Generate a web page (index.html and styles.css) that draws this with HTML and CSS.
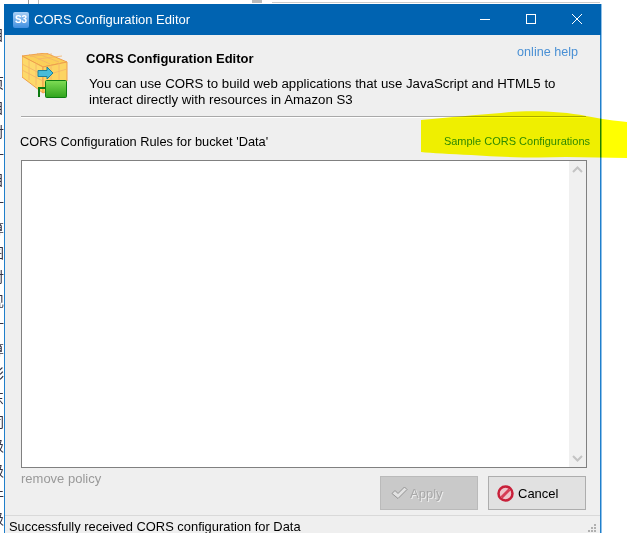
FILE: index.html
```html
<!DOCTYPE html>
<html lang="en">
<head>
    <meta charset="UTF-8">
    <meta name="viewport" content="width=device-width, initial-scale=1.0">
    <title>CORS Configuration Editor</title>
    <link rel="stylesheet" href="styles.css">
</head>
<body>
    <div class="desktop">
        <div class="behind-top">
            <svg width="627" height="4" viewBox="0 0 627 4">
                <rect x="28" y="0" width="1" height="4" fill="#999"/>
                <rect x="38" y="0" width="1" height="4" fill="#bbb"/>
                <rect x="252" y="0" width="10" height="3" fill="#bbb"/>
                <rect x="272" y="2" width="328" height="1" fill="#ccc"/>
            </svg>
        </div>
        <div class="behind-left">目<br>✓<br>页<br>目<br>对<br>计<br>目<br>计<br>算<br>图<br>对<br>现<br>计<br>算<br>彩<br>东<br>同<br>级<br>级<br>件<br>级</div>

        <div class="window">
            <div class="titlebar">
                <div class="app-icon">S3</div>
                <div class="window-title">CORS Configuration Editor</div>
                <div class="window-controls">
                    <svg class="ctrl" width="46" height="31" viewBox="0 0 46 31"><path d="M18 15.5h10" stroke="#fff" fill="none"/></svg>
                    <svg class="ctrl" width="46" height="31" viewBox="0 0 46 31"><rect x="18.5" y="10.5" width="9" height="9" stroke="#fff" fill="none"/></svg>
                    <svg class="ctrl" width="46" height="31" viewBox="0 0 46 31"><path d="M18 10l10 10M28 10l-10 10" stroke="#fff" fill="none"/></svg>
                </div>
            </div>

            <div class="header">
                <svg class="cube" width="46" height="46" viewBox="0 0 46 46">
                    <defs>
                        <linearGradient id="greenbox" x1="0" y1="0" x2="0" y2="1">
                            <stop offset="0" stop-color="#7fdc55"/>
                            <stop offset="1" stop-color="#2fa31c"/>
                        </linearGradient>
                    </defs>
                    <polygon points="0,3 24,0 45,9 21,14" fill="#fbcf58" stroke="#ee9f4c"/>
                    <polygon points="0,3 21,14 21,40 0,24" fill="#fdd96a" stroke="#ee9f4c"/>
                    <polygon points="21,14 45,9 45,28 21,40" fill="#fcd462" stroke="#ee9f4c"/>
                    <path d="M7 1.5L28 11M15 .5L37 9M8 3.5L30 1M7 7v20M14 10.500v22M0 11l21 11M0 17l21 11M29 12v22M37 10v20M21 23l24-7M16 6l24-3" stroke="#f3b36a" stroke-width=".8" fill="none"/>
                    <polygon points="16,17.500 25,17.500 25,14 31,20 25,26 25,23.500 16,23.500" fill="#46bcd8" stroke="#1b8199"/>
                    <path d="M17 44v-9h7" stroke="#0c7a10" stroke-width="2" fill="none"/>
                    <rect x="23.500" y="27.500" width="21" height="17" rx="1" fill="url(#greenbox)" stroke="#0d7c12"/>
                </svg>
                <div class="header-text">
                    <div class="header-title">CORS Configuration Editor</div>
                    <p class="header-desc">You can use CORS to build web applications that use JavaScript and HTML5 to<br>interact directly with resources in Amazon S3</p>
                </div>
                <a class="online-help">online help</a>
            </div>

            <div class="rules-row">
                <span>CORS Configuration Rules for bucket 'Data'</span>
                <a class="sample-link">Sample CORS Configurations</a>
            </div>

            <div class="editor">
                <div class="editor-text"></div>
                <div class="scrollbar">
                    <svg width="17" height="12" viewBox="0 0 17 12"><path d="M4 8l4.500-4.500L13 8" stroke="#c4c4c4" stroke-width="2" fill="none"/></svg>
                    <svg width="17" height="12" viewBox="0 0 17 12"><path d="M4 4l4.500 4.500L13 4" stroke="#c4c4c4" stroke-width="2" fill="none"/></svg>
                </div>
            </div>

            <div class="footer">
                <a class="remove-policy">remove policy</a>
                <div class="buttons">
                    <button class="btn btn-disabled">
                        <svg width="17" height="14" viewBox="0 0 17 14"><path d="M1 7.500l3-3 3 3L13.500 1 16 3.500 7 12.500z" fill="#e2e2e2" stroke="#949494"/></svg>
                        Apply
                    </button>
                    <button class="btn btn-cancel">
                        <svg width="17" height="17" viewBox="0 0 17 17">
                            <circle cx="8.500" cy="8.500" r="7" fill="#eec4cb" stroke="#c8203a" stroke-width="2.500"/>
                            <path d="M4.500 12.500l8-8" stroke="#d63c55" stroke-width="3"/>
                        </svg>
                        Cancel
                    </button>
                </div>
            </div>

            <div class="statusbar">Successfully received CORS configuration for Data</div>
            <svg class="grip" width="10" height="10" viewBox="0 0 10 10">
                <path d="M7 0h2v2H7zM4 3h2v2H4zM7 3h2v2H7zM1 6h2v2H1zM4 6h2v2H4zM7 6h2v2H7z" fill="#b0b0b0"/>
            </svg>
        </div>

        <svg class="highlight" width="206" height="48" viewBox="0 0 206 48">
            <path d="M0 9C30 6 55 4 80 2C105 -1 140 0 165 5C180 8 195 10 206 11L206 47L145 46C110 47 80 46 50 44C30 43 10 42 0 41Z" fill="#ffff00"/>
        </svg>
    </div>
</body>
</html>
```

FILE: styles.css
```css
body {
    margin: 0;
    background-color: white;
    overflow: hidden;
    font-family: "Liberation Sans", Arial, sans-serif;
    color: #000;
}
.desktop {
    position: relative;
    width: 627px;
    height: 533px;
    overflow: hidden;
    padding: 4px 0 0 4px;
    box-sizing: border-box;
}
.behind-top {
    position: absolute;
    left: 0;
    top: 0;
    height: 4px;
}
.behind-top svg {
    display: block;
}
.behind-left {
    position: absolute;
    left: -10px;
    top: 22px;
    width: 14px;
    overflow: hidden;
    font-family: "Noto Sans CJK SC", sans-serif;
    font-size: 14px;
    line-height: 24.2px;
    color: #334;
}
.window {
    position: relative;
    width: 597px;
    height: 540px;
    display: flex;
    flex-direction: column;
    background-color: #efefef;
    border-left: 1px solid #1f7fcb;
    border-right: 1px solid #1f7fcb;
    box-shadow: 1px 0 0 #8fc0e8;
    box-sizing: border-box;
}
.titlebar {
    display: flex;
    align-items: center;
    height: 31px;
    flex: none;
    margin: 0 -1px;
    padding-left: 9px;
    background-color: #0063b1;
    color: white;
}
.app-icon {
    width: 16px;
    height: 16px;
    border-radius: 2px;
    background: linear-gradient(#a9d0f5, #3f8fe0);
    color: white;
    font-size: 10px;
    font-weight: bold;
    line-height: 15px;
    text-align: center;
}
.window-title {
    flex: 1;
    margin-left: 5px;
    font-size: 13px;
}
.window-controls {
    display: flex;
    margin-right: 1px;
}
.ctrl {
    display: block;
}
.header {
    position: relative;
    display: flex;
    flex: none;
    height: 82px;
    margin: 0 14px 0 16px;
    padding: 16px 0 0 1px;
    box-sizing: border-box;
    border-bottom: 1px solid #a9a9a9;
    box-shadow: 0 1px 0 white;
}
.cube {
    flex: none;
    margin-top: 2px;
}
.header-text {
    margin-left: 18px;
}
.header-title {
    font-size: 13px;
    font-weight: bold;
    line-height: 15px;
}
.header-desc {
    margin: 10px 0 0 3px;
    font-size: 13.250px;
    line-height: 16px;
}
.online-help {
    position: absolute;
    right: 8px;
    top: 10px;
    color: #4a90d4;
    font-size: 12.600px;
}
.rules-row {
    display: flex;
    justify-content: space-between;
    align-items: center;
    flex: none;
    height: 42px;
    margin: 1px 10px 0 15px;
    padding-top: 4px;
    box-sizing: border-box;
    font-size: 12.800px;
}
.sample-link {
    color: #2f8a10;
    font-size: 11px;
}
.editor {
    display: flex;
    flex: none;
    height: 308px;
    margin: 0 13px 0 16px;
    background-color: white;
    border: 1px solid #808080;
    box-sizing: border-box;
}
.editor-text {
    flex: 1;
}
.scrollbar {
    display: flex;
    flex-direction: column;
    justify-content: space-between;
    width: 17px;
    padding: 3px 0;
    box-sizing: border-box;
    background-color: #f0f0f0;
}
.scrollbar svg {
    display: block;
}
.footer {
    display: flex;
    justify-content: space-between;
    flex: none;
    height: 47px;
    margin: 0 14px 0 16px;
    padding-top: 8px;
    box-sizing: border-box;
}
.remove-policy {
    color: #999;
    font-size: 13px;
    margin-top: -5px;
}
.buttons {
    display: flex;
    gap: 10px;
}
.btn {
    display: flex;
    align-items: center;
    gap: 2px;
    width: 98px;
    height: 34px;
    padding: 0 0 0 10px;
    background-color: #e1e1e1;
    border: 1px solid #adadad;
    font-family: "Liberation Sans", Arial, sans-serif;
    font-size: 13px;
    color: #000;
}
.btn-cancel {
    gap: 4px;
    padding-left: 8px;
}
.btn-disabled {
    background-color: #c9c9c9;
    border-color: #bababa;
    color: #a8a8a8;
    text-shadow: 1px 1px 0 #eee;
}
.statusbar {
    flex: none;
    padding: 3px 0 0 4px;
    border-top: 1px solid #d9d9d9;
    font-size: 12.900px;
    line-height: 16px;
}
.grip {
    position: absolute;
    right: 3px;
    top: 520px;
}
.highlight {
    position: absolute;
    left: 421px;
    top: 111px;
    mix-blend-mode: multiply;
}
```
